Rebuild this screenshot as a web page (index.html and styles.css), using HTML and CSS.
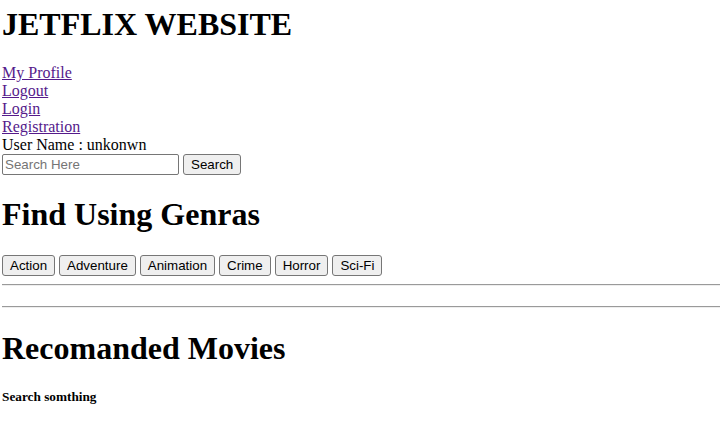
FILE: index.html
```html
<!DOCTYPE html>
<html lang="en">
<head>
    <meta charset="UTF-8">
    <title>Jetflix</title>
    <link rel="stylesheet" href="styles.css">
</head>
<body>
    <h1 class="site-title">JETFLIX WEBSITE</h1>

    <div class="nav-links">
        <a href="#" class="nav-link">My Profile</a>
        <a href="#" class="nav-link">Logout</a>
        <a href="#" class="nav-link">Login</a>
        <a href="#" class="nav-link">Registration</a>
    </div>
    <div class="user-name">User Name : unkonwn</div>

    <form class="search-form" onsubmit="return false">
        <input type="text" class="search-input" placeholder="Search Here">
        <button type="submit" class="btn">Search</button>
    </form>

    <h1>Find Using Genras</h1>

    <div class="genre-list">
        <button class="btn">Action</button>
        <button class="btn">Adventure</button>
        <button class="btn">Animation</button>
        <button class="btn">Crime</button>
        <button class="btn">Horror</button>
        <button class="btn">Sci-Fi</button>
    </div>

    <hr class="divider">
    <div class="genre-results"></div>
    <hr class="divider">

    <h1 class="movies-title">Recomanded Movies</h1>
    <h5 class="hint">Search somthing</h5>
</body>
</html>
```

FILE: styles.css
```css
body {
    margin: 0;
    padding: 0 0 0 2px;
    font-family: "Liberation Serif", "Times New Roman", serif;
    font-size: 16px;
    line-height: 18px;
    color: black;
    background: white;
}

h1 {
    font-size: 32px;
    line-height: 37px;
    font-weight: bold;
    margin: 21px 0;
}

.site-title {
    margin-top: 6px;
}

.nav-link {
    display: block;
    color: #551a8b;
}

.search-form {
    display: flex;
    align-items: center;
    gap: 4px;
    height: 21px;
    margin: 0;
}

.search-input {
    box-sizing: border-box;
    width: 177px;
    height: 21px;
    padding: 1px 2px;
    border: 1px solid #767676;
    border-radius: 2px;
    font-family: "Liberation Sans", Arial, sans-serif;
    font-size: 13.33px;
}

.search-input::placeholder {
    color: #757575;
}

.btn {
    box-sizing: border-box;
    height: 21px;
    padding: 1px 7px;
    background-color: #efefef;
    border: 1px solid #767676;
    border-radius: 3px;
    font-family: "Liberation Sans", Arial, sans-serif;
    font-size: 13.33px;
    color: black;
    cursor: pointer;
}

.genre-list {
    display: flex;
    gap: 4px;
    margin-top: 22px;
}

.divider {
    margin: 8px 0;
    border: 0;
    border-top: 1px solid #9a9a9a;
    border-bottom: 1px solid #eeeeee;
}

.genre-results {
    height: 4px;
}

.movies-title {
    margin-top: 22px;
}

.hint {
    font-size: 13.28px;
    line-height: 15px;
    margin: 22px 0;
}
```
